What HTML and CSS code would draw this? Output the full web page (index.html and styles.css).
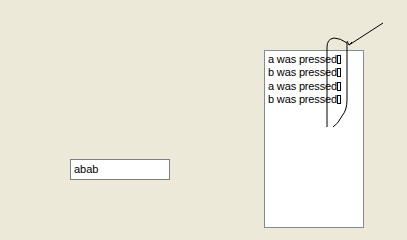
FILE: index.html
```html
<!DOCTYPE html>
<html>
<head>
<meta charset="utf-8">
<link rel="stylesheet" href="styles.css">
</head>
<body>
<div class="window">
  <div class="field">abab</div>
  <div class="log">
    <div class="line">a was pressed<span class="box"></span></div>
    <div class="line">b was pressed<span class="box"></span></div>
    <div class="line">a was pressed<span class="box"></span></div>
    <div class="line">b was pressed<span class="box"></span></div>
  </div>
</div>
<svg class="ink" width="407" height="240" viewBox="0 0 407 240">
  <path d="M383 23 L349 45" />
  <path d="M347 41 L349 45 L352 42" />
  <path d="M327 127 L327 47 Q327 39 334 38 Q340 38 347 43 L347 100 Q347 110 342 116 Q338 124 333 127" />
</svg>
</body>
</html>
```
FILE: styles.css
```css
html, body {
  margin: 0;
  padding: 0;
  width: 407px;
  height: 240px;
  overflow: hidden;
  background: #ECE9D8;
  font-family: "Liberation Sans", Arial, sans-serif;
  font-size: 11px;
  color: #000;
}
.window {
  display: flex;
  align-items: flex-start;
  padding: 50px 0 0 70px;
}
.field {
  box-sizing: border-box;
  width: 100px;
  height: 21px;
  margin-top: 109px;
  border: 1px solid #7F7F7F;
  background: #fff;
  padding: 3px 0 0 3px;
  line-height: 13px;
}
.log {
  box-sizing: border-box;
  width: 100px;
  height: 178px;
  margin-left: 94px;
  border: 1px solid #7F8C93;
  background: #fff;
  padding: 2px 0 0 3px;
}
.line {
  line-height: 13.4px;
  white-space: nowrap;
  letter-spacing: -0.15px;
}
.box {
  display: inline-block;
  width: 2px;
  height: 7px;
  border: 1px solid #000;
  vertical-align: -1px;
}
.ink {
  position: absolute;
  left: 0;
  top: 0;
  fill: none;
  stroke: #000;
  stroke-width: 1;
}
```
